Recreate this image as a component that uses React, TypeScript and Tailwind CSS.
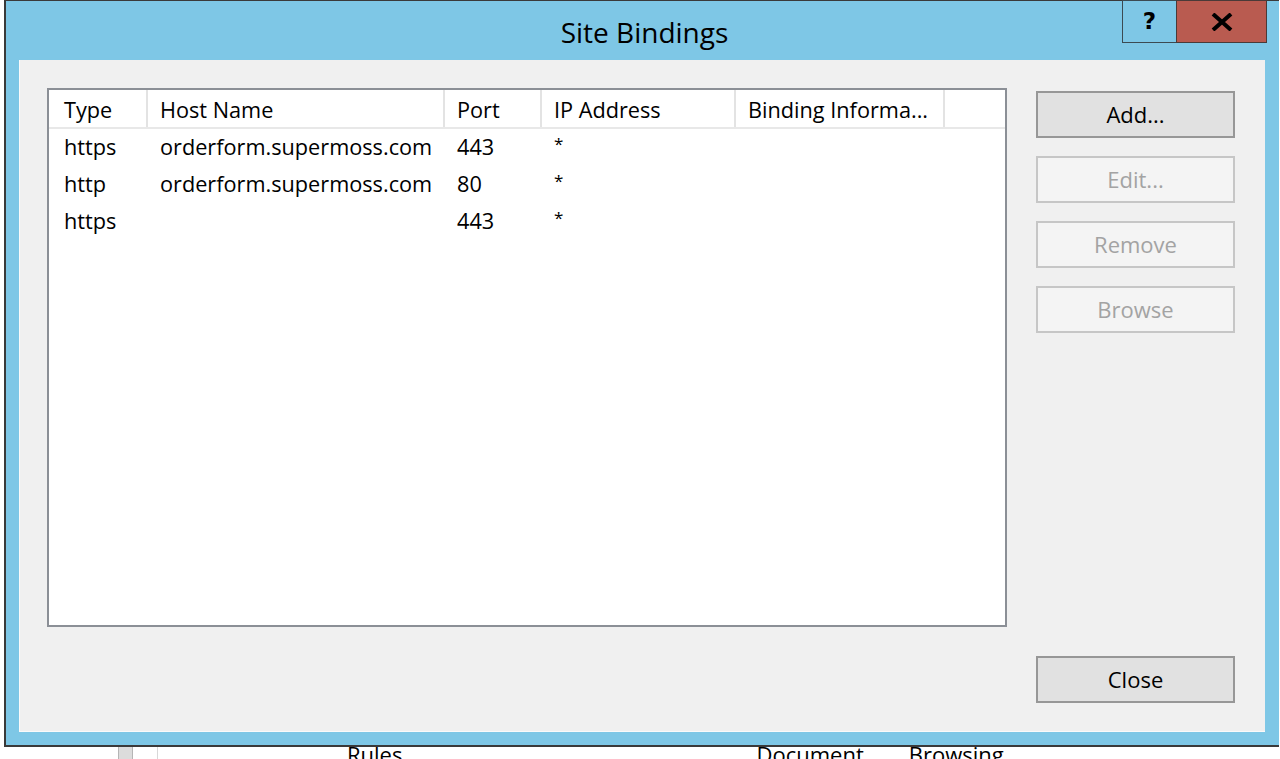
import React from 'react';

const FONT = { fontFamily: '"Open Sans", "Noto Sans", sans-serif' };

const COLUMNS = [
  { label: 'Type', width: 'w-[99px]', pad: 'pl-[15px]' },
  { label: 'Host Name', width: 'w-[297px]', pad: 'pl-[12px]' },
  { label: 'Port', width: 'w-[97px]', pad: 'pl-[12px]' },
  { label: 'IP Address', width: 'w-[194px]', pad: 'pl-[12px]' },
  { label: 'Binding Informa...', width: 'w-[209px]', pad: 'pl-[12px]' },
];

const ROWS = [
  ['https', 'orderform.supermoss.com', '443', '*', ''],
  ['http', 'orderform.supermoss.com', '80', '*', ''],
  ['https', '', '443', '*', ''],
];

function DialogButton({ label, enabled }: { label: string; enabled?: boolean }) {
  return (
    <button
      className={`w-[199px] h-[47px] flex items-center justify-center text-[22px] border-2 ${
        enabled
          ? 'bg-[#e1e1e1] border-[#979797] text-black'
          : 'bg-[#f4f4f4] border-[#c6c6c6] text-[#a3a3a3]'
      }`}
    >
      {label}
    </button>
  );
}

function BindingsList() {
  return (
    <div className="w-[960px] h-[539px] border-2 border-[#8b8f96] bg-white flex flex-col">
      {/* Header */}
      <div className="flex h-[39px] border-b-2 border-[#e8e8e8]">
        {COLUMNS.map((c) => (
          <div
            key={c.label}
            className={`${c.width} ${c.pad} pt-[3px] flex items-center border-r-2 border-[#e3e3e3] text-[21.7px] text-black whitespace-nowrap overflow-hidden`}
          >
            {c.label}
          </div>
        ))}
        <div className="flex-1" />
      </div>
      {/* Rows */}
      <div className="flex flex-col">
        {ROWS.map((r, i) => (
          <div key={i} className="flex h-[37px]">
            {r.map((cell, j) => (
              <div
                key={j}
                className={`${COLUMNS[j].width} ${COLUMNS[j].pad} flex items-center text-[21.7px] text-black whitespace-nowrap overflow-hidden`}
              >
                {cell === '*' ? <span className="text-[17px] -mt-[8px]">*</span> : cell}
              </div>
            ))}
          </div>
        ))}
      </div>
    </div>
  );
}

export default function App() {
  return (
    <div className="w-[1280px] h-[759px] bg-white overflow-hidden flex flex-col" style={FONT}>
      {/* Dialog window */}
      <div className="ml-[4px] w-[1275px] h-[747px] shrink-0 bg-[#7ec7e6] border-l-2 border-b-2 border-t border-[#3a3a3a] flex flex-col">
        {/* Title bar */}
        <div className="h-[59px] flex items-start relative">
          <div className="flex-1 h-[62px] flex items-center justify-center text-[28px] text-black pl-[4px]">
            Site Bindings
          </div>
          <div className="absolute right-[12px] top-[-1px] flex">
            <div className="w-[54px] h-[43px] border border-[#3c4a52] border-r-0 flex items-center justify-center">
              <span className="text-[23px] font-bold text-black leading-none" style={{ fontFamily: '"DejaVu Sans", sans-serif' }}>
                ?
              </span>
            </div>
            <div className="w-[91px] h-[43px] bg-[#b95b50] border border-[#4a3a38] flex items-center justify-center">
              <svg width="22" height="18" viewBox="0 0 22 18">
                <path d="M2 1 L20 17 M20 1 L2 17" stroke="#000" strokeWidth="4" />
              </svg>
            </div>
          </div>
        </div>
        {/* Client area */}
        <div className="ml-[13px] w-[1246px] h-[672px] bg-[#f0f0f0] border-l border-b border-[#fafafa] flex pt-[28px] pb-[28px] pl-[27px]">
          <BindingsList />
          <div className="ml-[29px] flex flex-col justify-between">
            <div className="mt-[3px] flex flex-col gap-[18px]">
              <DialogButton label="Add..." enabled />
              <DialogButton label="Edit..." />
              <DialogButton label="Remove" />
              <DialogButton label="Browse" />
            </div>
            <DialogButton label="Close" enabled />
          </div>
        </div>
      </div>
      {/* Background window peeking below */}
      <div className="flex-1 flex items-start overflow-hidden">
        <div className="ml-[118px] w-[15px] h-[12px] bg-[#dcdcdc] border-x border-[#b5b5b5]" />
        <div className="ml-[24px] w-px h-[12px] bg-[#d8d8d8]" />
        <div className="flex text-[22px] text-black leading-none -mt-[4px]">
          <span className="ml-[189px]">Rules</span>
          <span className="ml-[354px]">Document</span>
          <span className="ml-[45px]">Browsing</span>
        </div>
      </div>
    </div>
  );
}
